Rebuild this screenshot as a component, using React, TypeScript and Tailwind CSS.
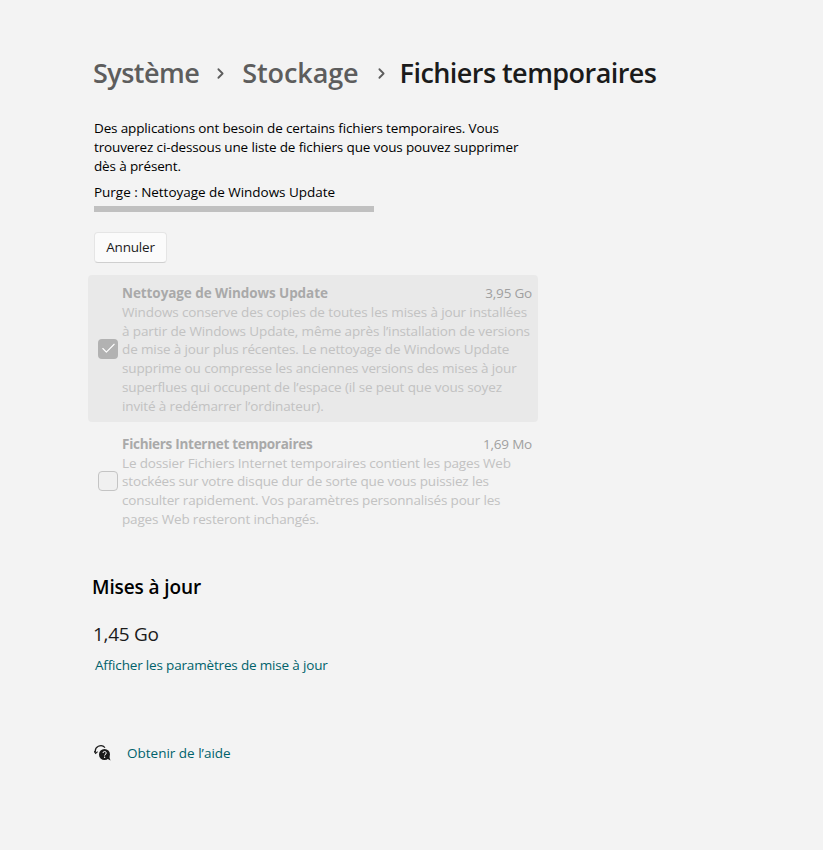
import { Check, ChevronRight } from 'lucide-react'

const font = { fontFamily: '"Open Sans", "Noto Sans", sans-serif' }

type ItemProps = {
	title: string
	size: string
	lines: string[]
	checked?: boolean
}

function CleanupItem({ title, size, lines, checked }: ItemProps) {
	return (
		<div className={`flex items-center w-[450px] rounded-[4px] pl-[10px] pr-[6px] pt-[9px] pb-[6px] ${checked ? 'bg-[#e9e9e9]' : ''}`}>
			<div
				className={`flex items-center justify-center shrink-0 w-[20px] h-[20px] mb-[2px] rounded-[4px] ${
					checked ? 'bg-[#b2b2b2]' : 'border border-[#c4c4c4] bg-[#f0f0f0]'
				}`}
			>
				{checked && <Check className="w-[17px] h-[17px] text-white" strokeWidth={1.6} />}
			</div>
			<div className="flex-1 ml-[4px]">
				<div className="flex justify-between items-center h-[19px] text-[13.5px] leading-[19px]">
					<span className={`font-bold text-[#a9a9a9] ${checked ? 'tracking-[-0.08px]' : 'tracking-[-0.28px]'}`}>{title}</span>
					<span className="text-[#a0a0a0] tracking-[-0.2px]">{size}</span>
				</div>
				<div className={`text-[13.5px] leading-[18.8px] text-[#c2c2c2] whitespace-nowrap ${checked ? 'tracking-[-0.125px]' : 'tracking-[-0.16px]'}`}>
					{lines.map((line) => (
						<div key={line}>{line}</div>
					))}
				</div>
			</div>
		</div>
	)
}

export default function App() {
	return (
		<div className="w-[823px] h-[850px] bg-[#f3f3f3] overflow-hidden pt-[53px] pl-[88px] text-black" style={font}>
			<div className="flex items-center h-[40px] pl-[5px] text-[27px] font-semibold whitespace-nowrap">
				<span className="text-[#5d5d5d] tracking-[-0.55px]">Système</span>
				<ChevronRight className="w-[17px] h-[17px] mx-[13px] text-[#5d5d5d]" strokeWidth={2.5} />
				<span className="text-[#5d5d5d] tracking-[-0.08px]">Stockage</span>
				<ChevronRight className="w-[17px] h-[17px] ml-[14px] mr-[10px] text-[#5d5d5d]" strokeWidth={2.5} />
				<span className="text-[#1b1b1b] tracking-[-0.55px]">Fichiers temporaires</span>
			</div>

			<div className="pl-[6px] mt-[26px] text-[13.5px] leading-[18.8px] tracking-[-0.14px] whitespace-nowrap">
				<div>Des applications ont besoin de certains fichiers temporaires. Vous</div>
				<div>trouverez ci-dessous une liste de fichiers que vous pouvez supprimer</div>
				<div>dès à présent.</div>
				<div className="mt-[7.6px] tracking-[-0.03px]">Purge : Nettoyage de Windows Update</div>
			</div>
			<div className="ml-[6px] mt-[4px] w-[280px] h-[6px] bg-[#c0c0c0]" />
			<button className="block ml-[6px] mt-[20px] w-[73px] h-[31px] rounded-[4px] bg-[#fbfbfb] border border-[#e5e5e5] border-b-[#cfcfcf] text-[13.5px] tracking-[-0.2px] text-[#1b1b1b]">
				Annuler
			</button>

			<div className="mt-[12px]">
				<CleanupItem
					checked
					title="Nettoyage de Windows Update"
					size="3,95 Go"
					lines={[
						'Windows conserve des copies de toutes les mises à jour installées',
						'à partir de Windows Update, même après l’installation de versions',
						'de mise à jour plus récentes. Le nettoyage de Windows Update',
						'supprime ou compresse les anciennes versions des mises à jour',
						'superflues qui occupent de l’espace (il se peut que vous soyez',
						'invité à redémarrer l’ordinateur).',
					]}
				/>
				<div className="mt-[4px]">
					<CleanupItem
						title="Fichiers Internet temporaires"
						size="1,69 Mo"
						lines={[
							'Le dossier Fichiers Internet temporaires contient les pages Web',
							'stockées sur votre disque dur de sorte que vous puissiez les',
							'consulter rapidement. Vos paramètres personnalisés pour les',
							'pages Web resteront inchangés.',
						]}
					/>
				</div>
			</div>

			<h2 className="mt-[38px] pl-[4px] h-[28px] text-[19px] leading-[28px] font-semibold tracking-[-0.1px]">Mises à jour</h2>
			<div className="mt-[19px] pl-[5px] h-[28px] text-[19px] leading-[28px] tracking-[-0.3px] text-[#1b1b1b]">1,45 Go</div>
			<a className="block mt-[7px] pl-[7px] text-[13.5px] leading-[20px] tracking-[-0.17px] text-[#00626b]">
				Afficher les paramètres de mise à jour
			</a>

			<div className="flex items-center mt-[68px] pl-[6px] h-[20px]">
				<svg width="18" height="18" viewBox="0 0 18 18" fill="none">
					<path d="M1.5 8.5 A5.5 5.5 0 0 1 11 3.6" stroke="#1b1b1b" strokeWidth="1.2" />
					<path d="M0 7 L1.6 9.5 L3.6 7.6" stroke="#1b1b1b" strokeWidth="1.1" />
					<circle cx="10.5" cy="10.5" r="5.5" fill="#1b1b1b" />
					<path d="M12 14 L16.5 16.5 L15 12 Z" fill="#1b1b1b" />
					<path d="M9 9 A1.6 1.6 0 1 1 11 10.6 L10.6 11.6" stroke="#fff" strokeWidth="1" />
					<circle cx="10.6" cy="13.2" r="0.7" fill="#fff" />
				</svg>
				<a className="ml-[15px] text-[13.5px] tracking-[0px] text-[#00626b]">Obtenir de l’aide</a>
			</div>
		</div>
	)
}
